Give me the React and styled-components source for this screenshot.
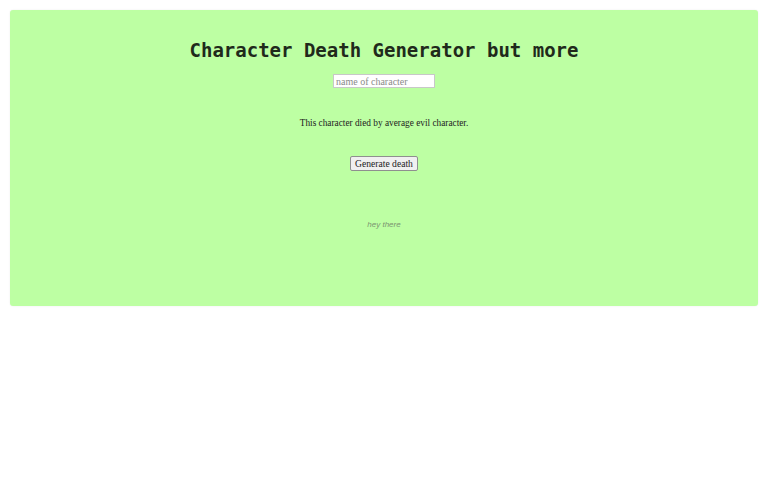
import React, { useState } from 'react'
import styled, { createGlobalStyle } from 'styled-components'

const GlobalStyle = createGlobalStyle`
  body {
    margin: 0;
    background: #ffffff;
    font-family: "Liberation Serif", serif;
  }
`

const Page = styled.div`
  padding: 10px;
`

const Panel = styled.section`
  background: #bdffa3;
  border-radius: 3px;
  box-shadow: 0 0 2px rgba(0, 0, 0, 0.08);
  height: 296px;
  box-sizing: border-box;
  padding-top: 28px;
  display: flex;
  flex-direction: column;
  align-items: center;
`

const Title = styled.h1`
  margin: 0;
  font-family: "DejaVu Sans Mono", monospace;
  font-weight: bold;
  font-size: 19px;
  line-height: 24px;
  color: #1f2a1b;
`

const NameInput = styled.input`
  margin-top: 12px;
  width: 102px;
  height: 14px;
  box-sizing: border-box;
  border: 1px solid #c8c8c8;
  background: #fff;
  padding: 0 2px;
  font-family: "Liberation Serif", serif;
  font-size: 10px;
  &::placeholder {
    color: #8a8a8a;
  }
`

const Result = styled.p`
  margin: 29px 0 0;
  font-size: 9.3px;
  line-height: 12px;
  color: #222;
`

const Button = styled.button`
  margin-top: 27px;
  height: 15px;
  padding: 0 4px;
  font-family: "Liberation Serif", serif;
  font-size: 9.6px;
  line-height: 12px;
  color: #222;
  background: #f0f0f0;
  border: 1px solid #8f8f8f;
  border-radius: 2px;
`

const Note = styled.p`
  margin: 49px 0 0;
  font-family: "Liberation Sans", sans-serif;
  font-style: italic;
  font-size: 8px;
  color: #7b9470;
`

export default function App() {
  const [name, setName] = useState('')
  return (
    <>
      <GlobalStyle />
      <Page>
        <Panel>
          <Title>Character Death Generator but more</Title>
          <NameInput
            placeholder="name of character"
            value={name}
            onChange={(e) => setName(e.target.value)}
          />
          <Result>This character died by average evil character.</Result>
          <Button>Generate death</Button>
          <Note>hey there</Note>
        </Panel>
      </Page>
    </>
  )
}
